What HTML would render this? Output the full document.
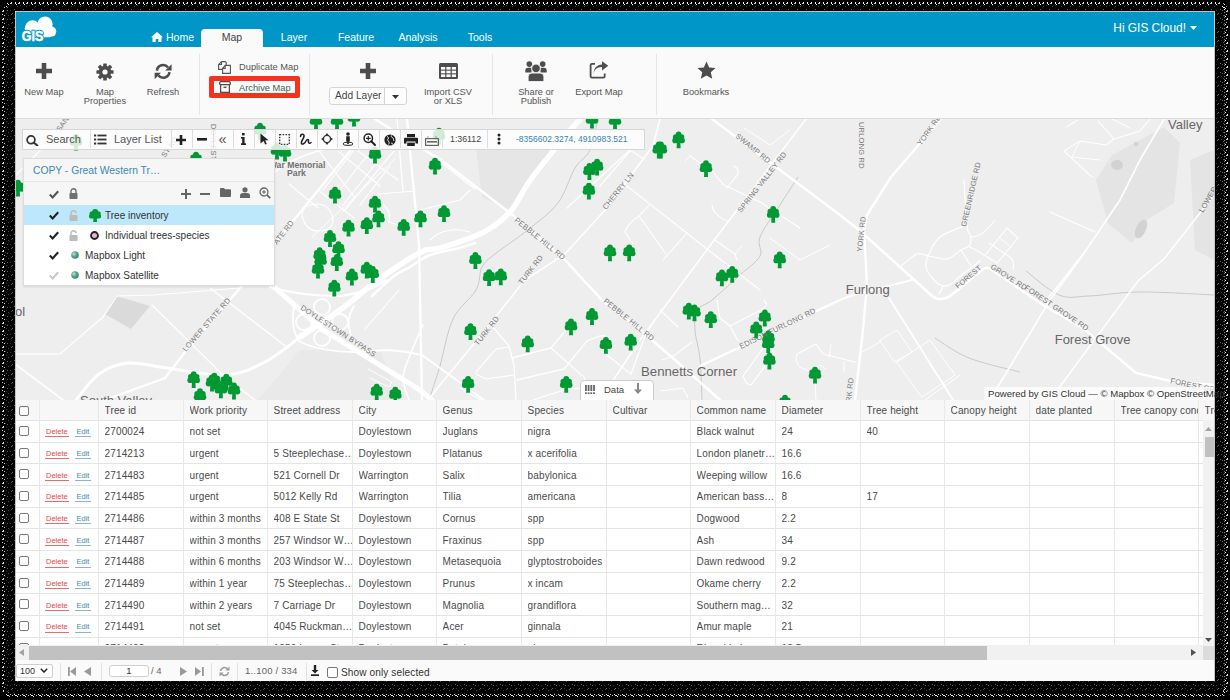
<!DOCTYPE html>
<html><head><meta charset="utf-8">
<style>
*{box-sizing:border-box;margin:0;padding:0}
html,body{width:1230px;height:700px;overflow:hidden;background:#000;font-family:"Liberation Sans",sans-serif}
.a{position:absolute}
#frame{position:absolute;left:15px;top:11px;width:1200px;height:670px;background:#fafafa;border:1px solid #c8c4c0;overflow:hidden}
#hdr{position:absolute;left:16px;top:12px;width:1198px;height:35px;background:#0097c8}
.tab{position:absolute;top:33px;color:#fff;font-size:10.5px;line-height:12px;text-align:center}
.rib{position:absolute;color:#555;font-size:9.3px;line-height:8.5px;text-align:center;white-space:nowrap}
.sep{position:absolute;top:54px;width:1px;height:61px;background:#e6e6e6}
svg{display:block}
.td{font-size:10px;line-height:13px;color:#4a4a4a;white-space:nowrap;overflow:hidden;letter-spacing:0.12px}
.dl{font-size:7.5px;line-height:8.3px;color:#e84848;border-bottom:1.6px solid #ee6a6a;padding:0 1px}
.ed{font-size:7.5px;line-height:8.3px;color:#4a8ab0;border-bottom:1.6px solid #8cb4cc;padding:0 1.5px}
</style></head><body>
<!--NOISE--><svg class="a" style="left:0;top:0" width="1230" height="700" viewBox="0 0 1230 700">
<defs><pattern id="nz1" width="8" height="8" patternUnits="userSpaceOnUse"><rect x="3" y="2" width="1" height="1" fill="#eee"/><rect x="7" y="1" width="1" height="1" fill="#ccc"/><rect x="0" y="7" width="1" height="1" fill="#eee"/><rect x="3" y="3" width="1" height="1" fill="#ccc"/><rect x="7" y="7" width="1" height="1" fill="#eee"/><rect x="2" y="3" width="1" height="1" fill="#ccc"/><rect x="2" y="6" width="1" height="1" fill="#ccc"/><rect x="0" y="1" width="1" height="1" fill="#fff"/><rect x="0" y="4" width="1" height="1" fill="#fff"/><rect x="4" y="7" width="1" height="1" fill="#ccc"/><rect x="6" y="6" width="1" height="1" fill="#eee"/><rect x="7" y="2" width="1" height="1" fill="#eee"/><rect x="1" y="0" width="1" height="1" fill="#fff"/><rect x="7" y="3" width="1" height="1" fill="#eee"/></pattern>
<pattern id="nz2" width="9" height="9" patternUnits="userSpaceOnUse"><rect x="6" y="4" width="1" height="1" fill="#333"/><rect x="8" y="6" width="1" height="1" fill="#666"/><rect x="8" y="6" width="1" height="1" fill="#444"/><rect x="5" y="0" width="1" height="1" fill="#666"/><rect x="2" y="5" width="1" height="1" fill="#555"/><rect x="3" y="4" width="1" height="1" fill="#666"/><rect x="1" y="1" width="1" height="1" fill="#333"/><rect x="7" y="1" width="1" height="1" fill="#666"/></pattern></defs>
<path fill-rule="evenodd" fill="url(#nz1)" d="M12 2H1218Q1228 2 1228 12V687Q1228 697 1218 697H12Q2 697 2 687V12Q2 2 12 2Z M13 5.5H1217Q1224.5 5.5 1224.5 13V686Q1224.5 693.5 1217 693.5H13Q5.5 693.5 5.5 686V13Q5.5 5.5 13 5.5Z"/>
<path fill-rule="evenodd" fill="url(#nz2)" d="M13 5.5H1217Q1224.5 5.5 1224.5 13V686Q1224.5 693.5 1217 693.5H13Q5.5 693.5 5.5 686V13Q5.5 5.5 13 5.5Z M15 10H1215V681H15Z"/>
</svg><!--/NOISE-->
<div id="frame"></div>
<div id="hdr"></div>
<!-- logo -->
<svg class="a" style="left:16px;top:12px" width="46" height="34" viewBox="16 12 46 34">
  <g fill="#fff"><circle cx="45" cy="24.2" r="7.6"/><ellipse cx="32.5" cy="28.5" rx="7.8" ry="8.3"/><circle cx="51.3" cy="31.6" r="5"/><rect x="26" y="29" width="26" height="8.3" rx="3"/></g>
  <text x="21.8" y="41.2" font-family="Liberation Sans" font-weight="bold" font-size="15.2" textLength="21.5" lengthAdjust="spacingAndGlyphs" fill="#0097c8" stroke="#0097c8" stroke-width="2.6">GIS</text>
  <text x="21.8" y="41.2" font-family="Liberation Sans" font-weight="bold" font-size="15.2" textLength="21.5" lengthAdjust="spacingAndGlyphs" fill="#fff" stroke="#fff" stroke-width="0.5">GIS</text>
</svg>
<!-- home -->
<svg class="a" style="left:151px;top:32px" width="12" height="10" viewBox="0 0 12 10"><path d="M6 0 L12 5.3 L10.5 5.3 L10.5 10 L7.3 10 L7.3 7 L4.7 7 L4.7 10 L1.5 10 L1.5 5.3 L0 5.3Z" fill="#fff"/></svg>
<div class="tab" style="left:166px;top:31px;text-align:left">Home</div>
<div class="a" style="left:201px;top:29px;width:62px;height:18px;background:#fafafa;border-radius:4px 4px 0 0"></div>
<div class="tab" style="left:201px;top:31px;width:62px;color:#444">Map</div>
<div class="tab" style="left:264px;top:31px;width:60px">Layer</div>
<div class="tab" style="left:326px;top:31px;width:60px">Feature</div>
<div class="tab" style="left:388px;top:31px;width:60px">Analysis</div>
<div class="tab" style="left:450px;top:31px;width:60px">Tools</div>
<div class="tab" style="left:1090px;top:21.5px;width:96px;text-align:right;font-size:11.9px">Hi GIS Cloud!</div>
<svg class="a" style="left:1190px;top:26px" width="7" height="4" viewBox="0 0 7 4"><path d="M0 0H7L3.5 4Z" fill="#fff"/></svg>

<!-- ribbon -->
<!-- ribbon icons -->
<svg class="a" style="left:36px;top:63px" width="16" height="16" viewBox="0 0 16 16"><path d="M5.7 0H10.3V5.7H16V10.3H10.3V16H5.7V10.3H0V5.7H5.7Z" fill="#4d4d4d"/></svg>
<div class="rib" style="left:14px;top:88px;width:60px">New Map</div>
<svg class="a" style="left:96px;top:63px" width="18" height="18" viewBox="-9 -9 18 18"><g fill="#4d4d4d"><circle r="6.2"/><g id="tooth"><rect x="-1.8" y="-8.6" width="3.6" height="4" rx="0.6"/></g><use href="#tooth" transform="rotate(45)"/><use href="#tooth" transform="rotate(90)"/><use href="#tooth" transform="rotate(135)"/><use href="#tooth" transform="rotate(180)"/><use href="#tooth" transform="rotate(225)"/><use href="#tooth" transform="rotate(270)"/><use href="#tooth" transform="rotate(315)"/></g><circle r="2.6" fill="#fafafa"/></svg>
<div class="rib" style="left:75px;top:88px;width:60px">Map<br>Properties</div>
<svg class="a" style="left:154px;top:63px" width="18" height="17" viewBox="0 0 18 17"><g fill="none" stroke="#4d4d4d" stroke-width="2.6"><path d="M2.9 7.6 A6.3 6.3 0 0 1 14 4.4"/><path d="M15.5 9.2 A6.3 6.3 0 0 1 4.4 12.4"/></g><path d="M17.6 1.2V7.6H11.2Z" fill="#4d4d4d"/><path d="M0.6 16.2V9.8H7Z" fill="#4d4d4d"/></svg>
<div class="rib" style="left:133px;top:88px;width:60px">Refresh</div>
<div class="sep" style="left:199px"></div>
<svg class="a" style="left:218px;top:61px" width="13" height="13" viewBox="0 0 13 13"><g fill="none" stroke="#555" stroke-width="1.1"><path d="M3.5 0.6H7.2L8.2 1.6V4.4"/><path d="M3.5 0.6L0.6 3.5V8.4H4.6"/><path d="M0.6 3.5H3.5V0.6"/><path d="M7.2 4.4H12.4V12.4H4.6V7.4Z"/><path d="M4.6 7.4H7.2V4.4"/></g></svg>
<div class="rib" style="left:239px;top:63px;text-align:left">Duplicate Map</div>
<div class="a" style="left:209px;top:76px;width:91px;height:22px;border:5px solid #f6321f;border-radius:2px"></div>
<svg class="a" style="left:219px;top:81px" width="12" height="12" viewBox="0 0 12 12"><g fill="none" stroke="#4d4d4d" stroke-width="1.3"><rect x="0.7" y="0.7" width="10.6" height="3" rx="1"/><path d="M1.6 3.7V11.3H10.4V3.7"/><path d="M4.5 6.3H7.5"/></g></svg>
<div class="rib" style="left:239px;top:84px;text-align:left">Archive Map</div>
<div class="sep" style="left:309px"></div>
<svg class="a" style="left:360px;top:63px" width="16" height="16" viewBox="0 0 16 16"><path d="M5.7 0H10.3V5.7H16V10.3H10.3V16H5.7V10.3H0V5.7H5.7Z" fill="#4d4d4d"/></svg>
<div class="a" style="left:329px;top:87px;width:78px;height:18px;background:#fff;border:1px solid #d4d4d4;border-radius:3px"></div>
<div class="a" style="left:384px;top:88px;width:1px;height:16px;background:#d4d4d4"></div>
<div class="a" style="left:335px;top:90px;font-size:10.2px;line-height:12px;color:#444">Add Layer</div>
<svg class="a" style="left:392px;top:95px" width="7" height="4" viewBox="0 0 7 4"><path d="M0 0H7L3.5 4Z" fill="#333"/></svg>
<svg class="a" style="left:439px;top:63px" width="19" height="16" viewBox="0 0 19 16"><rect x="0" y="0" width="19" height="16" rx="1.5" fill="#4d4d4d"/><g fill="#fafafa"><rect x="2" y="4" width="4.2" height="2.6"/><rect x="7.4" y="4" width="4.2" height="2.6"/><rect x="12.8" y="4" width="4.2" height="2.6"/><rect x="2" y="7.7" width="4.2" height="2.6"/><rect x="7.4" y="7.7" width="4.2" height="2.6"/><rect x="12.8" y="7.7" width="4.2" height="2.6"/><rect x="2" y="11.4" width="4.2" height="2.6"/><rect x="7.4" y="11.4" width="4.2" height="2.6"/><rect x="12.8" y="11.4" width="4.2" height="2.6"/></g></svg>
<div class="rib" style="left:418px;top:88px;width:60px">Import CSV<br>or XLS</div>
<div class="sep" style="left:492px"></div>
<svg class="a" style="left:525px;top:61px" width="22" height="21" viewBox="0 0 22 21"><g fill="#4d4d4d"><circle cx="4.3" cy="3.1" r="2.8"/><circle cx="17.7" cy="3.1" r="2.8"/><path d="M0.3 11.6V9.5Q0.3 6.8 3 6.8H6.5V11.6Z"/><path d="M21.7 11.6V9.5Q21.7 6.8 19 6.8H15.5V11.6Z"/><path d="M3.1 20.6V15.5Q3.1 12 7 12H15Q18.9 12 18.9 15.5V20.6Z" stroke="#fafafa" stroke-width="0.9"/><circle cx="11" cy="7.4" r="4.3" stroke="#fafafa" stroke-width="0.9"/></g></svg>
<div class="rib" style="left:506px;top:88px;width:60px">Share or<br>Publish</div>
<svg class="a" style="left:589px;top:61px" width="20" height="18" viewBox="0 0 20 18"><path d="M6 2.9H3Q1.6 2.9 1.6 4.3V15.3Q1.6 16.7 3 16.7H14.3Q15.7 16.7 15.7 15.3V12.5" fill="none" stroke="#4d4d4d" stroke-width="1.8"/><path d="M4.8 14.5C4.3 9 7.5 6 13 6V9.6L19.3 4.8L13 0.3V3.6C7 3.8 4 8.5 4.8 14.5Z" fill="#4d4d4d"/></svg>
<div class="rib" style="left:569px;top:88px;width:60px">Export Map</div>
<div class="sep" style="left:656px"></div>
<svg class="a" style="left:697px;top:61px" width="19" height="19" viewBox="0 0 19 19"><path d="M9.5 0.5 L12.2 6.4 L18.6 7 L13.8 11.3 L15.2 17.8 L9.5 14.5 L3.8 17.8 L5.2 11.3 L0.4 7 L6.8 6.4Z" fill="#4d4d4d"/></svg>
<div class="rib" style="left:676px;top:88px;width:60px">Bookmarks</div>

<div class="a" style="left:16px;top:118px;width:1198px;height:1px;background:#dcdcdc"></div>

<!-- MAP -->
<!--MAPSTART--><svg class="a" style="left:16px;top:119px" width="1198" height="281" viewBox="16 119 1198 281">
<defs><g id="tr"><circle cx="6.3" cy="2.9" r="2.9"/><circle cx="3.4" cy="5.6" r="2.8"/><circle cx="9.2" cy="5.6" r="2.8"/><circle cx="2.9" cy="9" r="2.9"/><circle cx="9.7" cy="9" r="2.9"/><ellipse cx="6.3" cy="7.5" rx="3.6" ry="4.6"/><path d="M4.6 10.5H8L8.3 16.8H4.3Z"/></g></defs>
<rect x="16" y="119" width="1198" height="281" fill="#eeeeee"/>
<g fill="#e4e4e4"><path d="M116 296 L150 306 L131 329 L105 314Z" fill="#dadada"/><path d="M476 150 L558 150 L510 210 L482 197Z" fill="#e6e6e6"/><path d="M1112 155 L1164 127 L1180 143 L1174 203 L1148 219 L1132 243 L1108 223 L1096 180Z"/><path d="M1190 160 L1214 150 L1214 260 L1195 250Z"/><ellipse cx="1117" cy="165" rx="6" ry="5" fill="#d2d2d2"/><ellipse cx="1141" cy="229" rx="5" ry="10" transform="rotate(25 1141 229)" fill="#d2d2d2"/><ellipse cx="1136" cy="144" rx="2.5" ry="2" fill="#d2d2d2"/><path d="M258 400 L300 350 L380 350 L400 400Z" fill="#e9e9e9"/></g>
<g fill="none" stroke="#c4c4c4" stroke-width="0.9">
<path d="M598 119 C596.7 124.2 593.8 141.8 590 150 C586.2 158.2 580.3 159.2 575 168 C569.7 176.8 565.7 192.8 558 203 C550.3 213.2 539.5 220.5 529 229 C518.5 237.5 502.8 247.7 495 254 C487.2 260.3 485.2 261.0 482 267 C478.8 273.0 480.8 281.3 476 290 C471.2 298.7 459.0 306.3 453 319 C447.0 331.7 443.5 354.0 440 366 C436.5 378.0 433.7 385.3 432 391 C430.3 396.7 430.3 398.5 430 400"/>
<path d="M798 177 C795.0 181.7 786.3 195.0 780 205 C773.7 215.0 763.3 228.5 760 237 C756.7 245.5 763.3 249.7 760 256 C756.7 262.3 748.0 267.7 740 275 C732.0 282.3 719.2 294.2 712 300 C704.8 305.8 699.8 305.0 697 310 C694.2 315.0 694.5 321.8 695 330 C695.5 338.2 698.8 347.3 700 359 C701.2 370.7 701.7 393.2 702 400"/>
<path d="M1026 271 C1031.5 275.0 1048.5 290.8 1059 295 C1069.5 299.2 1075.5 296.5 1089 296 C1102.5 295.5 1119.2 292.2 1140 292 C1160.8 291.8 1201.7 294.5 1214 295"/>
<path d="M935 338 C940.7 341.3 954.8 352.3 969 358 C983.2 363.7 1011.5 369.7 1020 372"/>
</g>
<g fill="none" stroke="#fff" stroke-width="1.6" stroke-linecap="round">
<path d="M375 119 L424 150 L440 159 L510 213 L565 260 L602 300 L640 330 L674 359 L720 400" stroke-width="2.4"/>
<path d="M660 119 L653 146 L605 210 L565 254 L525 280 L477 340 L440 385 L428 400" stroke-width="1.6"/>
<path d="M630 150 L567 208" stroke-width="1.3"/>
<path d="M627 186 L707 249 L760 290" stroke-width="1.3"/>
<path d="M600 186 L631 150" stroke-width="1.2"/>
<path d="M630 150 L644 159" stroke-width="1.1"/>
<path d="M649 205 L639 216 Q627 224 625 232 L633 244" stroke-width="1.1"/>
<path d="M639 216 L666 254" stroke-width="1.1"/>
<path d="M687 233 L663 260" stroke-width="1.1"/>
<path d="M690 156 L713 172 Q719 180 724 185 L760 202" stroke-width="1.2"/>
<path d="M690 156 L685 161" stroke-width="1.0"/>
<path d="M727 188 L738 174 Q739 168 734 166" stroke-width="1.1"/>
<path d="M712 205 Q713 215 729 222" stroke-width="1.1"/>
<path d="M715 240 L735 254 L737 260" stroke-width="1.1"/>
<path d="M735 254 L742 246" stroke-width="1.0"/>
<path d="M760 202 L800 228" stroke-width="1.1"/>
<path d="M744 128 L770 145 L790 130" stroke-width="1.0"/>
<path d="M770 238 L800 260 L830 245" stroke-width="1.0"/>
<path d="M660 310 L678 327" stroke-width="1.1"/>
<path d="M692 342 L675 355 L662 360" stroke-width="1.1"/>
<path d="M717 300 L720 318 L730 326 L738 341" stroke-width="1.2"/>
<path d="M730 326 L761 310 L767 305 L764 300" stroke-width="1.1"/>
<path d="M764 347 L743 376 Q746 385 751 385 L774 354 Q772 345 764 347Z" stroke-width="1.1"/>
<path d="M797 354 L816 344 L823 354 L855 362" stroke-width="1.1"/>
<path d="M797 354 Q794 362 800 367 L811 372 L820 365 L826 369" stroke-width="1.0"/>
<path d="M831 344 L829 357" stroke-width="1.0"/>
<path d="M844 362 L844 372" stroke-width="1.0"/>
<path d="M815 381 L816 400" stroke-width="1.0"/>
<path d="M660 391 L683 388 L688 398" stroke-width="1.1"/>
<path d="M712 119 L840 215 L859 230 L931 295 Q941 304 954 293 L983 269 Q987 266 992 270 L1040 303 L1084 329 L1136 373 L1170 381 L1214 385" stroke-width="2.4"/>
<path d="M806 119 L715 239 L640 340 L600 400" stroke-width="1.5"/>
<path d="M941 119 L891 177 L867 215 L864 230 L867 284 L863 330 L855 400" stroke-width="2.4"/>
<path d="M700 366 L840 300 L853 295 L912 280" stroke-width="2.2"/>
<path d="M889 298 L953 400" stroke-width="1.8"/>
<path d="M1164 119 L1140 160 L1120 200 L1080 259 L1050 300 L990 400" stroke-width="1.6"/>
<path d="M1214 195 L1164 259 L1138 281 L1050 400" stroke-width="1.5"/>
<path d="M1086 250 L1046 301" stroke-width="1.3"/>
<path d="M1066 127 L1078 120" stroke-width="1.1"/>
<path d="M1098 121 L1114 139 L1106 145 L1080 141 L1064 151 L1092 177" stroke-width="1.1"/>
<path d="M1080 141 L1072 157 L1100 160" stroke-width="1.0"/>
<path d="M1114 139 L1140 131 L1150 119" stroke-width="1.1"/>
<path d="M1112 119 L1130 128" stroke-width="1.0"/>
<path d="M1050 212 L1095 232" stroke-width="1.1"/>
<path d="M964 180 C964.5 187.7 965.8 216.5 967 226 C968.2 235.5 970.7 233.7 971 237 C971.3 240.3 970.7 243.8 969 246 C967.3 248.2 964.7 247.8 961 250 C957.3 252.2 952.3 258.0 947 259 C941.7 260.0 934.0 256.8 929 256 C924.0 255.2 921.8 252.2 917 254 C912.2 255.8 902.8 264.8 900 267" stroke-width="1.2"/>
<path d="M964 226 C960.0 227.8 945.8 232.3 940 237 C934.2 241.7 931.3 249.0 929 254 C926.7 259.0 925.2 262.7 926 267 C926.8 271.3 931.2 276.8 934 280 C936.8 283.2 940.2 285.3 943 286 C945.8 286.7 947.7 286.0 951 284 C954.3 282.0 958.2 277.8 963 274 C967.8 270.2 977.2 263.2 980 261" stroke-width="1.2"/>
<path d="M961 250 L971 266" stroke-width="1.1"/>
<path d="M970 237 Q982 238 994 221" stroke-width="1.1"/>
<path d="M968 246 L976 250 L997 263 L1018 238 L1007 228 L986 254" stroke-width="1.1"/>
<path d="M989 243 L1010 257 Q1015 262 1013 269" stroke-width="1.1"/>
<path d="M1000 238 L1011 247" stroke-width="1.0"/>
<path d="M943 286 L939 294" stroke-width="1.1"/>
<path d="M880 340 L897 330 L912 352 L895 362Z" stroke-width="1.0"/>
<path d="M897 362 L930 340 L955 375 L922 397Z" stroke-width="1.0"/>
<path d="M925 400 L960 375" stroke-width="1.0"/>
<path d="M862 352 L880 342" stroke-width="1.0"/>
<path d="M930 365 L945 385" stroke-width="1.0"/>
<path d="M407 119 L419 245 L422 400" stroke-width="2.4"/>
<path d="M397 119 L403 191" stroke-width="1.3"/>
<path d="M230 250 L266 280 L323 330 L420 390 L432 400" stroke-width="5.0"/>
<path d="M270 287 Q300 296 340 296 Q370 292 386 280" stroke-width="2.2"/>
<path d="M294 306 Q290 330 300 342 Q322 352 354 352 L389 350 Q405 351 422 355 L451 376 L484 400" stroke-width="1.8"/>
<path d="M354 306 Q345 320 351 335" stroke-width="1.8"/>
<path d="M423 325 C420.8 330.0 413.3 346.2 410 355 C406.7 363.8 403.2 370.5 403 378 C402.8 385.5 408.0 396.3 409 400" stroke-width="1.6"/>
<path d="M365 329 L399 290" stroke-width="1.1"/>
<path d="M368 369 L392 382 L389 387 L370 378" stroke-width="1.0"/>
<path d="M355 145 L293 221 L240 288 L185 352 L165 378 L105 400" stroke-width="2.2"/>
<path d="M300 337 C294.2 341.2 277.3 355.7 265 362 C252.7 368.3 242.3 374.0 226 375 C209.7 376.0 183.3 370.0 167 368 C150.7 366.0 139.3 362.0 128 363 C116.7 364.0 107.7 367.8 99 374 C90.3 380.2 79.8 395.7 76 400" stroke-width="3.0"/>
<path d="M152 305 L224 376 L255 400" stroke-width="1.4"/>
<path d="M210 288 L288 348" stroke-width="1.4"/>
<path d="M16 354 L60 354 L103 317 L117 296 L154 295 L240 288" stroke-width="1.2"/>
<path d="M15 364 L63 400" stroke-width="1.6"/>
<path d="M275 172 Q289 160 318 151 L330 148" stroke-width="1.6"/>
<path d="M319 151 L355 198" stroke-width="1.2"/>
<path d="M338 151 L380 186" stroke-width="1.2"/>
<path d="M358 151 L398 180" stroke-width="1.2"/>
<path d="M318 190 L354 218" stroke-width="1.2"/>
<path d="M289 184 L318 208" stroke-width="1.2"/>
<path d="M353 151 L323 190" stroke-width="1.2"/>
<path d="M366 157 L340 190" stroke-width="1.2"/>
<path d="M378 161 L343 205" stroke-width="1.2"/>
<path d="M390 166 L360 205" stroke-width="1.2"/>
<path d="M394 151 L344 211" stroke-width="1.2"/>
<path d="M395 159 L312 237" stroke-width="1.0"/>
<path d="M302 216 Q306 231 318 231 Q333 231 333 219 Q330 205 318 204 Q302 204 302 216Z" stroke-width="1.1"/>
<path d="M378 194 L415 191" stroke-width="1.2"/>
<path d="M383 204 Q392 212 389 222 L400 226" stroke-width="1.1"/>
<path d="M420 210 L460 200 L470 190" stroke-width="1.1"/>
<path d="M430 240 Q445 225 470 232" stroke-width="1.1"/>
<path d="M425 150 L475 189" stroke-width="1.5"/>
<path d="M492 326 L509 346 L514 365 L516 400" stroke-width="1.3"/>
<path d="M512 358 L551 348 L566 330 L575 320" stroke-width="1.3"/>
<path d="M476 372 L496 349 L509 347" stroke-width="1.2"/>
<path d="M476 374 L486 379 L514 375" stroke-width="1.2"/>
<path d="M517 380 L564 369 L587 341 L600 336 L605 336" stroke-width="1.3"/>
<path d="M551 348 L584 377 L590 400" stroke-width="1.2"/>
<path d="M603 352 L631 374 L645 336 L655 320" stroke-width="1.2"/>
<path d="M460 388 L481 400" stroke-width="1.2"/>
<path d="M533 400 L564 390 L580 388" stroke-width="1.2"/>
<path d="M16 175 L60 130" stroke-width="1.2"/>
<path d="M475 243 C472.3 243.8 466.5 246.0 459 248 C451.5 250.0 438.2 251.8 430 255 C421.8 258.2 416.0 263.5 410 267 C404.0 270.5 400.3 271.2 394 276 C387.7 280.8 375.7 292.7 372 296" stroke-width="2.6"/>
</g>
<g fill="none" stroke="#fff" stroke-width="5.5" stroke-linecap="round" stroke-linejoin="round">
<path d="M580 119 C575.7 124.2 562.5 139.5 554 150 C545.5 160.5 536.3 171.7 529 182 C521.7 192.3 517.8 203.5 510 212 C502.2 220.5 493.7 227.0 482 233 C470.3 239.0 450.2 244.8 440 248 C429.8 251.2 431.3 246.7 421 252 C410.7 257.3 390.8 270.8 378 280 C365.2 289.2 357.0 297.5 344 307 C331.0 316.5 307.3 332.0 300 337"/>
</g>
<g fill="none" stroke="#fff" stroke-width="1.8"><circle cx="322" cy="307" r="8"/><circle cx="304" cy="322" r="8"/><circle cx="340" cy="322" r="8"/><circle cx="322" cy="338" r="8"/></g>
<g fill="#009933">
<use href="#tr" x="330.7" y="112.8"/>
<use href="#tr" x="347.7" y="109.8"/>
<use href="#tr" x="253.7" y="122.8"/>
<use href="#tr" x="278.7" y="144.8"/>
<use href="#tr" x="270.7" y="142.8"/>
<use href="#tr" x="368.7" y="146.8"/>
<use href="#tr" x="428.7" y="157.8"/>
<use href="#tr" x="328.7" y="186.8"/>
<use href="#tr" x="368.7" y="195.8"/>
<use href="#tr" x="372.2" y="210.4"/>
<use href="#tr" x="342.2" y="219.8"/>
<use href="#tr" x="360.5" y="217.2"/>
<use href="#tr" x="397.4" y="218.9"/>
<use href="#tr" x="414.2" y="210.4"/>
<use href="#tr" x="437.7" y="205.2"/>
<use href="#tr" x="323.7" y="230.1"/>
<use href="#tr" x="332.2" y="241.2"/>
<use href="#tr" x="313.4" y="247.2"/>
<use href="#tr" x="314.3" y="252.8"/>
<use href="#tr" x="311.7" y="261.8"/>
<use href="#tr" x="330.5" y="254.1"/>
<use href="#tr" x="345.6" y="268.6"/>
<use href="#tr" x="360.5" y="261.8"/>
<use href="#tr" x="366.5" y="266.1"/>
<use href="#tr" x="328.0" y="279.8"/>
<use href="#tr" x="585.7" y="111.8"/>
<use href="#tr" x="608.7" y="112.8"/>
<use href="#tr" x="652.5" y="141.6"/>
<use href="#tr" x="590.8" y="158.8"/>
<use href="#tr" x="583.1" y="163.1"/>
<use href="#tr" x="582.6" y="182.8"/>
<use href="#tr" x="469.1" y="252.1"/>
<use href="#tr" x="482.8" y="269.2"/>
<use href="#tr" x="494.5" y="268.4"/>
<use href="#tr" x="603.7" y="244.4"/>
<use href="#tr" x="622.9" y="244.4"/>
<use href="#tr" x="585.7" y="308.1"/>
<use href="#tr" x="564.7" y="318.4"/>
<use href="#tr" x="464.2" y="323.2"/>
<use href="#tr" x="521.4" y="335.4"/>
<use href="#tr" x="599.6" y="337.0"/>
<use href="#tr" x="624.4" y="333.8"/>
<use href="#tr" x="461.8" y="376.0"/>
<use href="#tr" x="559.9" y="376.0"/>
<use href="#tr" x="672.3" y="131.4"/>
<use href="#tr" x="654.6" y="141.6"/>
<use href="#tr" x="699.7" y="160.2"/>
<use href="#tr" x="766.9" y="205.9"/>
<use href="#tr" x="773.4" y="251.4"/>
<use href="#tr" x="715.6" y="269.4"/>
<use href="#tr" x="725.9" y="265.9"/>
<use href="#tr" x="682.5" y="302.8"/>
<use href="#tr" x="688.2" y="304.5"/>
<use href="#tr" x="704.5" y="311.3"/>
<use href="#tr" x="758.5" y="309.6"/>
<use href="#tr" x="749.9" y="321.6"/>
<use href="#tr" x="762.2" y="330.2"/>
<use href="#tr" x="761.9" y="336.2"/>
<use href="#tr" x="763.1" y="352.8"/>
<use href="#tr" x="187.4" y="371.2"/>
<use href="#tr" x="205.7" y="374.6"/>
<use href="#tr" x="193.7" y="388.3"/>
<use href="#tr" x="208.0" y="372.8"/>
<use href="#tr" x="220.0" y="373.8"/>
<use href="#tr" x="214.6" y="381.5"/>
<use href="#tr" x="227.7" y="382.6"/>
<use href="#tr" x="370.4" y="383.8"/>
<use href="#tr" x="389.0" y="386.8"/>
<use href="#tr" x="11.7" y="179.8"/>
<use href="#tr" x="69.7" y="133.8"/>
<use href="#tr" x="189.7" y="151.8"/>
<use href="#tr" x="309.7" y="112.8"/>
<use href="#tr" x="432.7" y="127.8"/>
<use href="#tr" x="808.7" y="366.8"/>
<use href="#tr" x="778.7" y="394.8"/>
</g>
<g fill="#666" font-family="Liberation Sans" >
<text x="845.7" y="294.2" font-size="13">Furlong</text>
<text x="1054.7" y="343.9" font-size="13">Forest Grove</text>
<text x="641" y="375.5" font-size="13.2">Bennetts Corner</text>
<text x="1168" y="129" font-size="13">Valley</text>
<text x="15" y="316" font-size="13">ol</text>
<text x="80" y="405" font-size="13">South Valley</text>
</g>
<g fill="#777" font-family="Liberation Sans" font-size="7.5" letter-spacing="0.2">
<text transform="translate(514 221) rotate(39)">PEBBLE HILL RD</text>
<text transform="translate(603 302) rotate(39)">PEBBLE HILL RD</text>
<text transform="translate(522 285) rotate(-52)">TURK RD</text>
<text transform="translate(478 346) rotate(-52)">TURK RD</text>
<text transform="translate(606 210) rotate(-51)">CHERRY LN</text>
<text transform="translate(735 137) rotate(39)">SWAMP RD</text>
<text transform="translate(741 213) rotate(-52)">SPRING VALLEY RD</text>
<text transform="translate(741 349) rotate(-26)">EDISON FURLONG RD</text>
<text transform="translate(921 146) rotate(-55)">YORK RD</text>
<text transform="translate(859 122) rotate(90)">URLONG RD</text>
<text transform="translate(862 252) rotate(-84)">YORK RD</text>
<text transform="translate(851 402) rotate(-84)">RK RD</text>
<text transform="translate(966 227) rotate(-77)">GREENRIDGE RD</text>
<text transform="translate(958 289) rotate(-40)">FOREST</text>
<text transform="translate(990 268) rotate(33)">GROVE RD</text>
<text transform="translate(1024 289) rotate(34)">FOREST GROVE RD</text>
<text transform="translate(300 309) rotate(33)">DOYLESTOWN BYPASS</text>
<text transform="translate(277 245) rotate(-52)">ATE RD</text>
<text transform="translate(186 352) rotate(-49)">LOWER STATE RD</text>
<text transform="translate(1203 213) rotate(-60)">LOWER</text>
<text transform="translate(60 132) rotate(-55)">SAN</text>
<text transform="translate(211 124) rotate(90)">DOYLESTOWN</text>
<text transform="translate(165 158) rotate(-55)">ST KO</text>
<text transform="translate(1170 383) rotate(12)">FOREST GR</text>
</g>
<g fill="#707070" font-family="Liberation Sans" font-size="8.7" font-weight="bold" text-anchor="middle" stroke="#f2f2f2" stroke-width="1.2" paint-order="stroke"><text x="297" y="168">War Memorial</text><text x="296.5" y="176">Park</text></g>
</svg><!--MAPEND-->


<!-- map toolbar -->
<div class="a" style="left:22px;top:129px;width:623px;height:21px;background:rgba(255,255,255,0.82);border:1px solid #d6d6d6"></div>
<div class="a" style="left:89.5px;top:130px;width:1px;height:18px;background:#ddd"></div><div class="a" style="left:170.5px;top:130px;width:1px;height:18px;background:#ddd"></div><div class="a" style="left:191.5px;top:130px;width:1px;height:18px;background:#ddd"></div><div class="a" style="left:212.5px;top:130px;width:1px;height:18px;background:#ddd"></div><div class="a" style="left:233px;top:130px;width:1px;height:18px;background:#ddd"></div><div class="a" style="left:254px;top:130px;width:1px;height:18px;background:#ddd"></div><div class="a" style="left:274.5px;top:130px;width:1px;height:18px;background:#ddd"></div><div class="a" style="left:295.5px;top:130px;width:1px;height:18px;background:#ddd"></div><div class="a" style="left:316.5px;top:130px;width:1px;height:18px;background:#ddd"></div><div class="a" style="left:337px;top:130px;width:1px;height:18px;background:#ddd"></div><div class="a" style="left:358px;top:130px;width:1px;height:18px;background:#ddd"></div><div class="a" style="left:378.5px;top:130px;width:1px;height:18px;background:#ddd"></div><div class="a" style="left:399.5px;top:130px;width:1px;height:18px;background:#ddd"></div><div class="a" style="left:420.5px;top:130px;width:1px;height:18px;background:#ddd"></div><div class="a" style="left:441.5px;top:130px;width:1px;height:18px;background:#ddd"></div><div class="a" style="left:486.5px;top:130px;width:1px;height:18px;background:#ddd"></div>
<svg class="a" style="left:26px;top:135px" width="13" height="11" viewBox="0 0 13 11"><circle cx="5" cy="4.8" r="3.9" fill="none" stroke="#333" stroke-width="1.7"/><path d="M7.8 7.6L11.3 10.6" stroke="#333" stroke-width="2" stroke-linecap="round"/></svg>
<div class="a" style="left:46px;top:132px;font-size:11px;line-height:14px;color:#555">Search</div>
<svg class="a" style="left:94px;top:134px" width="13" height="11" viewBox="0 0 13 11"><g fill="#333"><rect x="0" y="0.5" width="2.2" height="2"/><rect x="0" y="4.5" width="2.2" height="2"/><rect x="0" y="8.5" width="2.2" height="2"/><rect x="3.5" y="0.6" width="9" height="1.8"/><rect x="3.5" y="4.6" width="9" height="1.8"/><rect x="3.5" y="8.6" width="9" height="1.8"/></g></svg>
<div class="a" style="left:114px;top:132px;font-size:11px;line-height:14px;color:#555">Layer List</div>
<svg class="a" style="left:176px;top:134.5px" width="10" height="10" viewBox="0 0 10 10"><path d="M3.7 0H6.3V3.7H10V6.3H6.3V10H3.7V6.3H0V3.7H3.7Z" fill="#222"/></svg>
<svg class="a" style="left:197px;top:138px" width="10" height="3" viewBox="0 0 10 3"><rect width="10" height="2.6" fill="#222"/></svg>
<div class="a" style="left:218.5px;top:131.5px;font-size:14.5px;line-height:14px;color:#555">&laquo;</div>
<svg class="a" style="left:241px;top:133px" width="5" height="12" viewBox="0 0 5 12"><g fill="#222"><rect x="1" y="0" width="2.6" height="2.4"/><path d="M0 4H3.6V10.2H5V12H0V10.2H1.2V5.6H0Z"/></g></svg>
<svg class="a" style="left:260px;top:133px" width="9" height="12" viewBox="0 0 9 12"><path d="M0.5 0.5L8.5 7.2H5.2L6.8 11L5.2 11.6L3.6 7.9L0.5 10.5Z" fill="#222"/></svg>
<svg class="a" style="left:279px;top:134px" width="11" height="11" viewBox="0 0 11 11"><rect x="0.7" y="0.7" width="9.6" height="9.6" fill="none" stroke="#333" stroke-width="1.3" stroke-dasharray="1.6 1.3"/></svg>
<svg class="a" style="left:299px;top:133px" width="13" height="12" viewBox="0 0 13 12"><path d="M1.5 3.5 C1.5 0.5 5.5 0.5 5 3.5 C4.5 6 1.5 8.5 2.5 10.5 C3.5 12 6 10 7 8 C8 6 10 6 9.5 8 C9 10 10.5 11 12 9.5" fill="none" stroke="#222" stroke-width="1.5" stroke-linecap="round"/></svg>
<svg class="a" style="left:321px;top:133px" width="12" height="12" viewBox="0 0 12 12"><g fill="none" stroke="#333" stroke-width="1.4"><circle cx="6" cy="6" r="3.6"/></g><g fill="#333"><path d="M6 0L7.8 2.6H4.2Z"/><path d="M6 12L7.8 9.4H4.2Z"/><path d="M0 6L2.6 4.2V7.8Z"/><path d="M12 6L9.4 4.2V7.8Z"/></g></svg>
<svg class="a" style="left:342px;top:132px" width="12" height="14" viewBox="0 0 12 14"><g fill="#222"><circle cx="6" cy="2" r="1.8"/><path d="M4.2 4.3H7.8V9.5H6.8V12H5.2V9.5H4.2Z"/></g><ellipse cx="6" cy="11.8" rx="5" ry="1.6" fill="none" stroke="#222" stroke-width="1"/></svg>
<svg class="a" style="left:363px;top:133px" width="13" height="13" viewBox="0 0 13 13"><circle cx="5.3" cy="5.3" r="4.2" fill="none" stroke="#222" stroke-width="1.5"/><path d="M8.3 8.3L12 12" stroke="#222" stroke-width="2" stroke-linecap="round"/><path d="M5.3 3V7.6M3 5.3H7.6" stroke="#222" stroke-width="1.2"/></svg>
<svg class="a" style="left:384px;top:134px" width="12" height="12" viewBox="0 0 12 12"><circle cx="6" cy="6" r="5.6" fill="#222"/><path d="M3 2.5 C4.5 3 5 4 4 5 C3 6 4.5 7 5 8 C5.5 9 4.5 10.5 4.5 10.5 M7.5 1.5 C7 3 8 3.5 9 4 C10 4.5 9 6 10 7 M7 9.5 C8 8.5 9 9.5 8.5 10.5" fill="none" stroke="#fff" stroke-width="0.9"/></svg>
<svg class="a" style="left:404px;top:134px" width="14" height="12" viewBox="0 0 14 12"><g fill="#222"><rect x="3" y="0" width="8" height="3.2"/><path d="M0 4.6Q0 3.8 1 3.8H13Q14 3.8 14 4.6V9.5H11.5V7.5H2.5V9.5H0Z"/><rect x="3.2" y="8.6" width="7.6" height="3.4"/></g></svg>
<svg class="a" style="left:425px;top:136px" width="14" height="10" viewBox="0 0 14 10"><rect x="0.6" y="2.6" width="12.8" height="6.8" fill="none" stroke="#666" stroke-width="1.2"/><rect x="2" y="5" width="10" height="1.6" fill="#666"/><path d="M3 0V2M11 0V2" stroke="#888" stroke-width="0.8"/></svg>
<div class="a" style="left:450px;top:133px;font-size:8.8px;line-height:12px;color:#444">1:36112</div>
<svg class="a" style="left:497px;top:133px" width="4" height="12" viewBox="0 0 4 12"><g fill="#222"><circle cx="2" cy="2" r="1.5"/><circle cx="2" cy="6" r="1.5"/><circle cx="2" cy="10" r="1.5"/></g></svg>
<div class="a" style="left:516px;top:133px;font-size:8.5px;line-height:12px;color:#3a84b0">-8356602.3274, 4910983.521</div>

<!-- layer panel -->
<div class="a" style="left:23px;top:158px;width:252px;height:128px;background:#fff;border:1px solid #ddd;box-shadow:0 1px 2px rgba(0,0,0,0.1)"></div>
<div class="a" style="left:24px;top:159px;width:250px;height:46px;background:#f6f6f6"></div>
<div class="a" style="left:24px;top:181px;width:250px;height:1px;background:#e6e6e6"></div>
<div class="a" style="left:33px;top:163.5px;font-size:10.3px;line-height:14px;color:#3d8ab3">COPY - Great Western Tr…</div>
<div class="a" style="left:24px;top:205px;width:250px;height:20px;background:#bde7fb"></div>

<svg class="a" style="left:49px;top:190px" width="10" height="9" viewBox="0 0 10 9"><path d="M0.8 4.6L3.6 7.4L9.2 1.2" fill="none" stroke="#555" stroke-width="2.1"/></svg><svg class="a" style="left:69px;top:188px" width="9" height="11" viewBox="0 0 9 11"><path d="M2 5V3.2A2.5 2.5 0 0 1 7 3.2V5" fill="none" stroke="#707070" stroke-width="1.4"/><rect x="0.5" y="5" width="8" height="6" rx="0.8" fill="#707070"/></svg><svg class="a" style="left:181px;top:189px" width="10" height="10" viewBox="0 0 10 10"><path d="M4 0H6V4H10V6H6V10H4V6H0V4H4Z" fill="#666"/></svg><svg class="a" style="left:200px;top:193px" width="10" height="3" viewBox="0 0 10 3"><rect width="10" height="2" fill="#666"/></svg><svg class="a" style="left:220px;top:188px" width="11" height="9" viewBox="0 0 11 9"><path d="M0 1Q0 0 1 0H4L5 1.3H10Q11 1.3 11 2.3V8Q11 9 10 9H1Q0 9 0 8Z" fill="#666"/></svg><svg class="a" style="left:240px;top:187px" width="10" height="11" viewBox="0 0 10 11"><g fill="#666"><circle cx="5" cy="2.8" r="2.6"/><path d="M0 11V8.5Q0 6 3 6H7Q10 6 10 8.5V11Z"/></g></svg><svg class="a" style="left:259px;top:187px" width="12" height="12" viewBox="0 0 12 12"><circle cx="5" cy="5" r="4" fill="none" stroke="#666" stroke-width="1.3"/><path d="M7.8 7.8L11.2 11.2" stroke="#666" stroke-width="1.8"/><path d="M5 3V7M3 5H7" stroke="#666" stroke-width="1"/></svg><svg class="a" style="left:49px;top:211px" width="10" height="9" viewBox="0 0 10 9"><path d="M0.8 4.6L3.6 7.4L9.2 1.2" fill="none" stroke="#222" stroke-width="2.1"/></svg><svg class="a" style="left:69px;top:210px" width="9" height="11" viewBox="0 0 9 11"><path d="M2 5V3.2A2.5 2.5 0 0 1 7 3.2" fill="none" stroke="#bbb" stroke-width="1.4"/><rect x="0.5" y="5" width="8" height="6" rx="0.8" fill="#bbb"/></svg><svg class="a" style="left:88.5px;top:209px" width="12.3" height="13.4" viewBox="0 0 12.6 16.8" preserveAspectRatio="none"><use href="#tr" fill="#009933"/></svg><div class="a" style="left:105px;top:209px;font-size:10px;line-height:13px;color:#333">Tree inventory</div><svg class="a" style="left:49px;top:231px" width="10" height="9" viewBox="0 0 10 9"><path d="M0.8 4.6L3.6 7.4L9.2 1.2" fill="none" stroke="#222" stroke-width="2.1"/></svg><svg class="a" style="left:69px;top:230px" width="9" height="11" viewBox="0 0 9 11"><path d="M2 5V3.2A2.5 2.5 0 0 1 7 3.2" fill="none" stroke="#bbb" stroke-width="1.4"/><rect x="0.5" y="5" width="8" height="6" rx="0.8" fill="#bbb"/></svg><svg class="a" style="left:90px;top:230.5px" width="9" height="9" viewBox="0 0 9 9"><circle cx="4.5" cy="4.5" r="3.5" fill="#eab4d0" stroke="#222" stroke-width="1.8"/></svg><div class="a" style="left:105px;top:229px;font-size:10px;line-height:13px;color:#333">Individual trees-species</div><svg class="a" style="left:49px;top:251px" width="10" height="9" viewBox="0 0 10 9"><path d="M0.8 4.6L3.6 7.4L9.2 1.2" fill="none" stroke="#222" stroke-width="2.1"/></svg><svg class="a" style="left:71px;top:251px" width="8" height="8" viewBox="0 0 8 8"><defs><radialGradient id="gg71251" cx="0.35" cy="0.35" r="0.7"><stop offset="0" stop-color="#b8e0f0"/><stop offset="0.5" stop-color="#5aa870"/><stop offset="1" stop-color="#2f7fa0"/></radialGradient></defs><circle cx="4" cy="4" r="3.8" fill="url(#gg71251)"/></svg><div class="a" style="left:85px;top:249px;font-size:10px;line-height:13px;color:#333">Mapbox Light</div><svg class="a" style="left:49px;top:271px" width="10" height="9" viewBox="0 0 10 9"><path d="M0.8 4.6L3.6 7.4L9.2 1.2" fill="none" stroke="#c8c8c8" stroke-width="2.1"/></svg><svg class="a" style="left:71px;top:271px" width="8" height="8" viewBox="0 0 8 8"><defs><radialGradient id="gg71271" cx="0.35" cy="0.35" r="0.7"><stop offset="0" stop-color="#b8e0f0"/><stop offset="0.5" stop-color="#5aa870"/><stop offset="1" stop-color="#2f7fa0"/></radialGradient></defs><circle cx="4" cy="4" r="3.8" fill="url(#gg71271)"/></svg><div class="a" style="left:85px;top:269px;font-size:10px;line-height:13px;color:#333">Mapbox Satellite</div>
<div class="a" style="left:580px;top:380px;width:74px;height:22px;background:#fff;border:1px solid #ccc;border-radius:4px 4px 0 0"></div>
<svg class="a" style="left:585px;top:385px" width="10" height="10" viewBox="0 0 10 10"><g fill="#666"><rect x="0" y="0" width="1.8" height="6"/><rect x="2.7" y="0" width="1.8" height="6"/><rect x="5.4" y="0" width="1.8" height="6"/><rect x="8.1" y="0" width="1.8" height="6"/><rect x="0" y="7.3" width="1.8" height="1.8"/><rect x="2.7" y="7.3" width="1.8" height="1.8"/><rect x="5.4" y="7.3" width="1.8" height="1.8"/><rect x="8.1" y="7.3" width="1.8" height="1.8"/></g></svg>
<div class="a" style="left:604px;top:384px;font-size:9.5px;line-height:12px;color:#444">Data</div>
<svg class="a" style="left:634px;top:383px" width="8" height="11" viewBox="0 0 8 11"><path d="M3 0H5V6.5H8L4 11L0 6.5H3Z" fill="#888"/></svg>
<div class="a" style="left:984px;top:387px;width:230px;height:13px;background:rgba(255,255,255,0.75)"></div>
<div class="a" style="left:988px;top:388px;font-size:9.6px;line-height:11px;color:#333;white-space:nowrap">Powered by GIS Cloud — © Mapbox © OpenStreetMap</div>

<!-- TABLE -->
<!--TBLSTART--><div class="a" style="left:16px;top:400px;width:1198px;height:246px;background:#fff"></div>
<div class="a" style="left:16px;top:400px;width:1198px;height:20px;background:#f7f7f7"></div>
<div class="a" style="left:16px;top:420.00px;width:1188px;height:1px;background:#e4e4e4"></div>
<div class="a" style="left:16px;top:441.67px;width:1188px;height:1px;background:#e4e4e4"></div>
<div class="a" style="left:16px;top:463.34px;width:1188px;height:1px;background:#e4e4e4"></div>
<div class="a" style="left:16px;top:485.01px;width:1188px;height:1px;background:#e4e4e4"></div>
<div class="a" style="left:16px;top:506.68px;width:1188px;height:1px;background:#e4e4e4"></div>
<div class="a" style="left:16px;top:528.35px;width:1188px;height:1px;background:#e4e4e4"></div>
<div class="a" style="left:16px;top:550.02px;width:1188px;height:1px;background:#e4e4e4"></div>
<div class="a" style="left:16px;top:571.69px;width:1188px;height:1px;background:#e4e4e4"></div>
<div class="a" style="left:16px;top:593.36px;width:1188px;height:1px;background:#e4e4e4"></div>
<div class="a" style="left:16px;top:615.03px;width:1188px;height:1px;background:#e4e4e4"></div>
<div class="a" style="left:16px;top:636.70px;width:1188px;height:1px;background:#e4e4e4"></div>
<div class="a" style="left:39px;top:400px;width:1px;height:246px;background:#e8e8e8"></div>
<div class="a" style="left:98px;top:400px;width:1px;height:246px;background:#e8e8e8"></div>
<div class="a" style="left:183px;top:400px;width:1px;height:246px;background:#e8e8e8"></div>
<div class="a" style="left:267px;top:400px;width:1px;height:246px;background:#e8e8e8"></div>
<div class="a" style="left:352px;top:400px;width:1px;height:246px;background:#e8e8e8"></div>
<div class="a" style="left:436px;top:400px;width:1px;height:246px;background:#e8e8e8"></div>
<div class="a" style="left:521px;top:400px;width:1px;height:246px;background:#e8e8e8"></div>
<div class="a" style="left:606px;top:400px;width:1px;height:246px;background:#e8e8e8"></div>
<div class="a" style="left:690px;top:400px;width:1px;height:246px;background:#e8e8e8"></div>
<div class="a" style="left:775px;top:400px;width:1px;height:246px;background:#e8e8e8"></div>
<div class="a" style="left:860px;top:400px;width:1px;height:246px;background:#e8e8e8"></div>
<div class="a" style="left:944px;top:400px;width:1px;height:246px;background:#e8e8e8"></div>
<div class="a" style="left:1029px;top:400px;width:1px;height:246px;background:#e8e8e8"></div>
<div class="a" style="left:1114px;top:400px;width:1px;height:246px;background:#e8e8e8"></div>
<div class="a" style="left:1198px;top:400px;width:1px;height:246px;background:#e8e8e8"></div>
<div class="a td" style="left:104.6px;top:404px;width:77.7px">Tree id</div>
<div class="a td" style="left:189.6px;top:404px;width:77.7px">Work priority</div>
<div class="a td" style="left:273.6px;top:404px;width:77.7px">Street address</div>
<div class="a td" style="left:358.6px;top:404px;width:77.7px">City</div>
<div class="a td" style="left:442.6px;top:404px;width:77.7px">Genus</div>
<div class="a td" style="left:527.6px;top:404px;width:77.7px">Species</div>
<div class="a td" style="left:612.6px;top:404px;width:77.7px">Cultivar</div>
<div class="a td" style="left:696.6px;top:404px;width:77.7px">Common name</div>
<div class="a td" style="left:781.6px;top:404px;width:77.7px">Diameter</div>
<div class="a td" style="left:866.6px;top:404px;width:77.7px">Tree height</div>
<div class="a td" style="left:950.6px;top:404px;width:77.7px">Canopy height</div>
<div class="a td" style="left:1035.6px;top:404px;width:77.7px">date planted</div>
<div class="a td" style="left:1120.6px;top:404px;width:77.7px">Tree canopy cond</div>
<div class="a td" style="left:1204.6px;top:404px;width:10.0px">Tree</div>
<div class="a" style="left:19px;top:405.5px;width:10px;height:10px;border:1px solid #7a7a7a;border-radius:2px;background:#fff"></div>
<div class="a" style="left:19px;top:425.8px;width:10px;height:10px;border:1px solid #7a7a7a;border-radius:2px;background:#fff"></div>
<div class="a dl" style="left:45px;top:428.2px">Delete</div>
<div class="a ed" style="left:75px;top:428.2px">Edit</div>
<div class="a td" style="left:104.6px;top:425.2px;width:78px">2700024</div>
<div class="a td" style="left:189.6px;top:425.2px;width:78px">not set</div>
<div class="a td" style="left:358.6px;top:425.2px;width:78px">Doylestown</div>
<div class="a td" style="left:442.6px;top:425.2px;width:78px">Juglans</div>
<div class="a td" style="left:527.6px;top:425.2px;width:78px">nigra</div>
<div class="a td" style="left:696.6px;top:425.2px;width:78px">Black walnut</div>
<div class="a td" style="left:781.6px;top:425.2px;width:78px">24</div>
<div class="a td" style="left:866.6px;top:425.2px;width:78px">40</div>
<div class="a" style="left:19px;top:447.5px;width:10px;height:10px;border:1px solid #7a7a7a;border-radius:2px;background:#fff"></div>
<div class="a dl" style="left:45px;top:449.9px">Delete</div>
<div class="a ed" style="left:75px;top:449.9px">Edit</div>
<div class="a td" style="left:104.6px;top:446.9px;width:78px">2714213</div>
<div class="a td" style="left:189.6px;top:446.9px;width:78px">urgent</div>
<div class="a td" style="left:273.6px;top:446.9px;width:78px">5 Steeplechase…</div>
<div class="a td" style="left:358.6px;top:446.9px;width:78px">Doylestown</div>
<div class="a td" style="left:442.6px;top:446.9px;width:78px">Platanus</div>
<div class="a td" style="left:527.6px;top:446.9px;width:78px">x acerifolia</div>
<div class="a td" style="left:696.6px;top:446.9px;width:78px">London planetr…</div>
<div class="a td" style="left:781.6px;top:446.9px;width:78px">16.6</div>
<div class="a" style="left:19px;top:469.2px;width:10px;height:10px;border:1px solid #7a7a7a;border-radius:2px;background:#fff"></div>
<div class="a dl" style="left:45px;top:471.6px">Delete</div>
<div class="a ed" style="left:75px;top:471.6px">Edit</div>
<div class="a td" style="left:104.6px;top:468.6px;width:78px">2714483</div>
<div class="a td" style="left:189.6px;top:468.6px;width:78px">urgent</div>
<div class="a td" style="left:273.6px;top:468.6px;width:78px">521 Cornell Dr</div>
<div class="a td" style="left:358.6px;top:468.6px;width:78px">Warrington</div>
<div class="a td" style="left:442.6px;top:468.6px;width:78px">Salix</div>
<div class="a td" style="left:527.6px;top:468.6px;width:78px">babylonica</div>
<div class="a td" style="left:696.6px;top:468.6px;width:78px">Weeping willow</div>
<div class="a td" style="left:781.6px;top:468.6px;width:78px">16.6</div>
<div class="a" style="left:19px;top:490.8px;width:10px;height:10px;border:1px solid #7a7a7a;border-radius:2px;background:#fff"></div>
<div class="a dl" style="left:45px;top:493.2px">Delete</div>
<div class="a ed" style="left:75px;top:493.2px">Edit</div>
<div class="a td" style="left:104.6px;top:490.2px;width:78px">2714485</div>
<div class="a td" style="left:189.6px;top:490.2px;width:78px">urgent</div>
<div class="a td" style="left:273.6px;top:490.2px;width:78px">5012 Kelly Rd</div>
<div class="a td" style="left:358.6px;top:490.2px;width:78px">Warrington</div>
<div class="a td" style="left:442.6px;top:490.2px;width:78px">Tilia</div>
<div class="a td" style="left:527.6px;top:490.2px;width:78px">americana</div>
<div class="a td" style="left:696.6px;top:490.2px;width:78px">American bass…</div>
<div class="a td" style="left:781.6px;top:490.2px;width:78px">8</div>
<div class="a td" style="left:866.6px;top:490.2px;width:78px">17</div>
<div class="a" style="left:19px;top:512.5px;width:10px;height:10px;border:1px solid #7a7a7a;border-radius:2px;background:#fff"></div>
<div class="a dl" style="left:45px;top:514.9px">Delete</div>
<div class="a ed" style="left:75px;top:514.9px">Edit</div>
<div class="a td" style="left:104.6px;top:511.9px;width:78px">2714486</div>
<div class="a td" style="left:189.6px;top:511.9px;width:78px">within 3 months</div>
<div class="a td" style="left:273.6px;top:511.9px;width:78px">408 E State St</div>
<div class="a td" style="left:358.6px;top:511.9px;width:78px">Doylestown</div>
<div class="a td" style="left:442.6px;top:511.9px;width:78px">Cornus</div>
<div class="a td" style="left:527.6px;top:511.9px;width:78px">spp</div>
<div class="a td" style="left:696.6px;top:511.9px;width:78px">Dogwood</div>
<div class="a td" style="left:781.6px;top:511.9px;width:78px">2.2</div>
<div class="a" style="left:19px;top:534.2px;width:10px;height:10px;border:1px solid #7a7a7a;border-radius:2px;background:#fff"></div>
<div class="a dl" style="left:45px;top:536.6px">Delete</div>
<div class="a ed" style="left:75px;top:536.6px">Edit</div>
<div class="a td" style="left:104.6px;top:533.6px;width:78px">2714487</div>
<div class="a td" style="left:189.6px;top:533.6px;width:78px">within 3 months</div>
<div class="a td" style="left:273.6px;top:533.6px;width:78px">257 Windsor W…</div>
<div class="a td" style="left:358.6px;top:533.6px;width:78px">Doylestown</div>
<div class="a td" style="left:442.6px;top:533.6px;width:78px">Fraxinus</div>
<div class="a td" style="left:527.6px;top:533.6px;width:78px">spp</div>
<div class="a td" style="left:696.6px;top:533.6px;width:78px">Ash</div>
<div class="a td" style="left:781.6px;top:533.6px;width:78px">34</div>
<div class="a" style="left:19px;top:555.9px;width:10px;height:10px;border:1px solid #7a7a7a;border-radius:2px;background:#fff"></div>
<div class="a dl" style="left:45px;top:558.3px">Delete</div>
<div class="a ed" style="left:75px;top:558.3px">Edit</div>
<div class="a td" style="left:104.6px;top:555.3px;width:78px">2714488</div>
<div class="a td" style="left:189.6px;top:555.3px;width:78px">within 6 months</div>
<div class="a td" style="left:273.6px;top:555.3px;width:78px">203 Windsor W…</div>
<div class="a td" style="left:358.6px;top:555.3px;width:78px">Doylestown</div>
<div class="a td" style="left:442.6px;top:555.3px;width:78px">Metasequoia</div>
<div class="a td" style="left:527.6px;top:555.3px;width:78px">glyptostroboides</div>
<div class="a td" style="left:696.6px;top:555.3px;width:78px">Dawn redwood</div>
<div class="a td" style="left:781.6px;top:555.3px;width:78px">9.2</div>
<div class="a" style="left:19px;top:577.5px;width:10px;height:10px;border:1px solid #7a7a7a;border-radius:2px;background:#fff"></div>
<div class="a dl" style="left:45px;top:579.9px">Delete</div>
<div class="a ed" style="left:75px;top:579.9px">Edit</div>
<div class="a td" style="left:104.6px;top:576.9px;width:78px">2714489</div>
<div class="a td" style="left:189.6px;top:576.9px;width:78px">within 1 year</div>
<div class="a td" style="left:273.6px;top:576.9px;width:78px">75 Steeplechas…</div>
<div class="a td" style="left:358.6px;top:576.9px;width:78px">Doylestown</div>
<div class="a td" style="left:442.6px;top:576.9px;width:78px">Prunus</div>
<div class="a td" style="left:527.6px;top:576.9px;width:78px">x incam</div>
<div class="a td" style="left:696.6px;top:576.9px;width:78px">Okame cherry</div>
<div class="a td" style="left:781.6px;top:576.9px;width:78px">2.2</div>
<div class="a" style="left:19px;top:599.2px;width:10px;height:10px;border:1px solid #7a7a7a;border-radius:2px;background:#fff"></div>
<div class="a dl" style="left:45px;top:601.6px">Delete</div>
<div class="a ed" style="left:75px;top:601.6px">Edit</div>
<div class="a td" style="left:104.6px;top:598.6px;width:78px">2714490</div>
<div class="a td" style="left:189.6px;top:598.6px;width:78px">within 2 years</div>
<div class="a td" style="left:273.6px;top:598.6px;width:78px">7 Carriage Dr</div>
<div class="a td" style="left:358.6px;top:598.6px;width:78px">Doylestown</div>
<div class="a td" style="left:442.6px;top:598.6px;width:78px">Magnolia</div>
<div class="a td" style="left:527.6px;top:598.6px;width:78px">grandiflora</div>
<div class="a td" style="left:696.6px;top:598.6px;width:78px">Southern mag…</div>
<div class="a td" style="left:781.6px;top:598.6px;width:78px">32</div>
<div class="a" style="left:19px;top:620.9px;width:10px;height:10px;border:1px solid #7a7a7a;border-radius:2px;background:#fff"></div>
<div class="a dl" style="left:45px;top:623.3px">Delete</div>
<div class="a ed" style="left:75px;top:623.3px">Edit</div>
<div class="a td" style="left:104.6px;top:620.3px;width:78px">2714491</div>
<div class="a td" style="left:189.6px;top:620.3px;width:78px">not set</div>
<div class="a td" style="left:273.6px;top:620.3px;width:78px">4045 Ruckman…</div>
<div class="a td" style="left:358.6px;top:620.3px;width:78px">Doylestown</div>
<div class="a td" style="left:442.6px;top:620.3px;width:78px">Acer</div>
<div class="a td" style="left:527.6px;top:620.3px;width:78px">ginnala</div>
<div class="a td" style="left:696.6px;top:620.3px;width:78px">Amur maple</div>
<div class="a td" style="left:781.6px;top:620.3px;width:78px">21</div>
<div class="a" style="left:19px;top:642.5px;width:10px;height:10px;border:1px solid #7a7a7a;border-radius:2px;background:#fff"></div>
<div class="a dl" style="left:45px;top:644.9px">Delete</div>
<div class="a ed" style="left:75px;top:644.9px">Edit</div>
<div class="a td" style="left:104.6px;top:641.9px;width:78px">2714492</div>
<div class="a td" style="left:189.6px;top:641.9px;width:78px">urgent</div>
<div class="a td" style="left:273.6px;top:641.9px;width:78px">1850 Lower St…</div>
<div class="a td" style="left:358.6px;top:641.9px;width:78px">Doylestown</div>
<div class="a td" style="left:442.6px;top:641.9px;width:78px">Betula</div>
<div class="a td" style="left:527.6px;top:641.9px;width:78px">nigra</div>
<div class="a td" style="left:696.6px;top:641.9px;width:78px">River birch</div>
<div class="a td" style="left:781.6px;top:641.9px;width:78px">12.5</div>
<div class="a" style="left:16px;top:646px;width:1198px;height:35px;background:#fafafa"></div>
<div class="a" style="left:16px;top:645px;width:1188px;height:15px;background:#f1f1f1"></div>
<div class="a" style="left:29px;top:646px;width:958px;height:13.5px;background:#c1c1c1"></div>
<svg class="a" style="left:19px;top:649px" width="5" height="7" viewBox="0 0 5 7"><path d="M5 0V7L0 3.5Z" fill="#a3a3a3"/></svg>
<svg class="a" style="left:1191px;top:649px" width="5" height="7" viewBox="0 0 5 7"><path d="M0 0V7L5 3.5Z" fill="#505050"/></svg>
<div class="a" style="left:1203px;top:645px;width:11px;height:15px;background:#dcdcdc"></div>
<div class="a" style="left:1203px;top:420px;width:11px;height:226px;background:#f1f1f1"></div>
<svg class="a" style="left:1205px;top:427px" width="7" height="4" viewBox="0 0 7 4"><path d="M0 4H7L3.5 0Z" fill="#a3a3a3"/></svg>
<svg class="a" style="left:1205px;top:638px" width="7" height="4" viewBox="0 0 7 4"><path d="M0 0H7L3.5 4Z" fill="#505050"/></svg>
<div class="a" style="left:1205px;top:437px;width:9px;height:20px;background:#c1c1c1"></div>
<div class="a" style="left:16px;top:664px;width:37px;height:14px;background:#fff;border:1px solid #cfcfcf;border-radius:2px"></div>
<div class="a" style="left:20px;top:665px;font-size:9px;line-height:12px;color:#333">100</div>
<svg class="a" style="left:40px;top:668px" width="8" height="5" viewBox="0 0 8 5"><path d="M0.8 0.8L4 4L7.2 0.8" fill="none" stroke="#222" stroke-width="1.5"/></svg>
<div class="a" style="left:60px;top:663px;width:1px;height:17px;background:#e2e2e2"></div>
<svg class="a" style="left:68px;top:667px" width="24" height="9" viewBox="0 0 24 9"><g fill="#999"><rect x="0" y="0" width="1.8" height="9"/><path d="M2 4.5L8 0V9Z"/><path d="M16 4.5L23 0V9Z"/></g></svg>
<div class="a" style="left:101px;top:663px;width:1px;height:17px;background:#e2e2e2"></div>
<div class="a" style="left:109px;top:665px;width:40px;height:12px;background:#fff;border:1px solid #d0d0d0;border-radius:3px"></div>
<div class="a" style="left:109px;top:665px;width:40px;font-size:9.5px;line-height:12px;color:#333;text-align:center">1</div>
<div class="a" style="left:151px;top:665px;font-size:9.5px;line-height:12px;color:#666">/ 4</div>
<svg class="a" style="left:180px;top:667px" width="24" height="9" viewBox="0 0 24 9"><g fill="#999"><path d="M0 0L7 4.5L0 9Z"/><path d="M15 0L21 4.5L15 9Z"/><rect x="22" y="0" width="1.8" height="9"/></g></svg>
<div class="a" style="left:211px;top:663px;width:1px;height:17px;background:#e2e2e2"></div>
<svg class="a" style="left:219px;top:666px" width="11" height="11" viewBox="0 0 11 11"><g fill="none" stroke="#999" stroke-width="1.6"><path d="M1.5 5 A4 4 0 0 1 8.5 3"/><path d="M9.5 6 A4 4 0 0 1 2.5 8"/></g><path d="M10.5 0.5V4.5H6.5Z" fill="#999"/><path d="M0.5 10.5V6.5H4.5Z" fill="#999"/></svg>
<div class="a" style="left:237px;top:663px;width:1px;height:17px;background:#e2e2e2"></div>
<div class="a" style="left:245px;top:665px;font-size:9.5px;line-height:12px;color:#666;letter-spacing:0.2px">1..100 / 334</div>
<div class="a" style="left:306px;top:663px;width:1px;height:17px;background:#e2e2e2"></div>
<svg class="a" style="left:311px;top:665px" width="8" height="11" viewBox="0 0 8 11"><g fill="#222"><path d="M2.8 0H5.2V5H7.5L4 8.6L0.5 5H2.8Z"/><rect x="0" y="9.3" width="8" height="1.7"/></g></svg>
<div class="a" style="left:327px;top:667px;width:11px;height:11px;border:1px solid #777;border-radius:2px;background:#fff"></div>
<div class="a" style="left:341px;top:666px;font-size:10.1px;line-height:13px;color:#333;letter-spacing:0.1px">Show only selected</div><!--TBLEND-->
</body></html>
